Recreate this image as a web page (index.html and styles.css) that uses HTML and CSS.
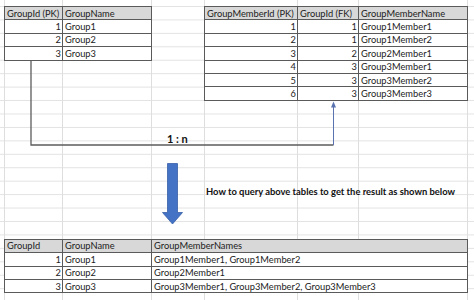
FILE: index.html
```html
<!DOCTYPE html>
<html>
<head>
<meta charset="utf-8">
<link rel="stylesheet" href="styles.css">
</head>
<body>
<div class="sheet">
  <div class="top-row">
    <table class="tbl t1">
      <colgroup><col class="c-a"><col class="c-b"></colgroup>
      <tr class="hd"><td>GroupId (PK)</td><td>GroupName</td></tr>
      <tr><td class="num">1</td><td>Group1</td></tr>
      <tr><td class="num">2</td><td>Group2</td></tr>
      <tr><td class="num">3</td><td>Group3</td></tr>
    </table>
    <table class="tbl t2">
      <colgroup><col class="c-d"><col class="c-e"><col class="c-f"></colgroup>
      <tr class="hd"><td>GroupMemberId (PK)</td><td>GroupId (FK)</td><td>GroupMemberName</td></tr>
      <tr><td class="num">1</td><td class="num">1</td><td>Group1Member1</td></tr>
      <tr><td class="num">2</td><td class="num">1</td><td>Group1Member2</td></tr>
      <tr><td class="num">3</td><td class="num">2</td><td>Group2Member1</td></tr>
      <tr><td class="num">4</td><td class="num">3</td><td>Group3Member1</td></tr>
      <tr><td class="num">5</td><td class="num">3</td><td>Group3Member2</td></tr>
      <tr><td class="num">6</td><td class="num">3</td><td>Group3Member3</td></tr>
    </table>
  </div>

  <div class="rel-label">1 : n</div>

  <p class="question">How to query above tables to get the result as shown below</p>

  <table class="tbl t3">
    <colgroup><col class="c-a"><col class="c-b"><col class="c-w"></colgroup>
    <tr class="hd"><td>GroupId</td><td>GroupName</td><td>GroupMemberNames</td></tr>
    <tr><td class="num">1</td><td>Group1</td><td>Group1Member1, Group1Member2</td></tr>
    <tr><td class="num">2</td><td>Group2</td><td>Group2Member1</td></tr>
    <tr><td class="num">3</td><td>Group3</td><td>Group3Member1, Group3Member2, Group3Member3</td></tr>
  </table>

  <svg class="overlay" width="474" height="300" viewBox="0 0 474 300" xmlns="http://www.w3.org/2000/svg">
    <polyline points="31,60 31,145 333.5,145" fill="none" stroke="#5c5c5c" stroke-width="1.3"/>
    <line x1="333.5" y1="145" x2="333.5" y2="106" stroke="#5a72b0" stroke-width="1"/>
    <polygon points="333.5,101.5 331,107.5 336,107.5" fill="#5a72b0"/>
    <polygon points="167.5,163.5 177.5,163.5 177.5,212.5 182.5,212.5 172.5,224 162.5,212.5 167.5,212.5" fill="#4472c4" stroke="#365fa8" stroke-width="0.8"/>
  </svg>
</div>
</body>
</html>
```

FILE: styles.css
```css
html, body {
  margin: 0;
  padding: 0;
  background: #fff;
}

.sheet {
  position: relative;
  box-sizing: border-box;
  width: 474px;
  height: 300px;
  overflow: hidden;
  padding: 6px 0 0 4px;
  font-family: Lato, "Open Sans", sans-serif;
  font-size: 9.3px;
  color: #1c1c1c;
  background-color: #fff;
  background-image:
    linear-gradient(#dedede, #dedede),
    linear-gradient(#dedede, #dedede),
    linear-gradient(#dedede, #dedede),
    linear-gradient(#dedede, #dedede),
    linear-gradient(#dedede, #dedede),
    linear-gradient(#dedede, #dedede),
    linear-gradient(#dedede, #dedede),
    repeating-linear-gradient(to bottom, #e2e2e2 0 1px, transparent 1px 13.45px);
  background-size:
    1px 100%, 1px 100%, 1px 100%, 1px 100%, 1px 100%, 1px 100%, 1px 100%,
    100% 13.45px;
  background-position:
    4px 0, 62px 0, 151px 0, 204px 0, 297px 0, 358px 0, 467px 0,
    0 6px;
  background-repeat:
    no-repeat, no-repeat, no-repeat, no-repeat, no-repeat, no-repeat, no-repeat,
    repeat;
}

.top-row {
  display: flex;
  align-items: flex-start;
  gap: 52px;
}

.tbl {
  border-collapse: collapse;
  table-layout: fixed;
  background: #fff;
}

.tbl td {
  border: 1px solid #5a5a5a;
  height: 12.4px;
  padding: 0 2px;
  line-height: 11px;
  white-space: nowrap;
  overflow: hidden;
  vertical-align: middle;
}

.tbl .hd td {
  background: #d8d8d8;
}

.tbl td.num {
  text-align: right;
  padding-right: 1px;
}

.t1 { width: 147px; }
.t2 { width: 263px; }
.t3 { width: 463px; margin-top: 41px; }

.c-a { width: 58px; }
.c-b { width: 89px; }
.c-d { width: 93px; }
.c-e { width: 61px; }
.c-f { width: 109px; }
.c-w { width: 316px; }

.rel-label {
  margin: 32px 0 0 163px;
  font-family: Lato, sans-serif;
  font-weight: 700;
  font-size: 11px;
  line-height: 12px;
  color: #111;
}

.question {
  margin: 41px 0 0 202px;
  font-weight: 700;
  font-size: 9.4px;
  line-height: 12px;
  color: #111;
}

.overlay {
  position: absolute;
  left: 0;
  top: 0;
  pointer-events: none;
}
```
